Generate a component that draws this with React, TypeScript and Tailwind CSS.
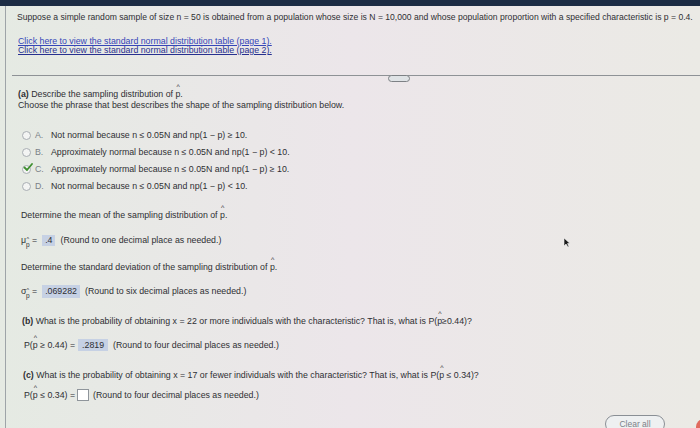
import React from "react";

const font = { fontFamily: '"Liberation Sans", Arial, sans-serif' };

function PHat({ children = "p" }: { children?: React.ReactNode }) {
  return (
    <span className="relative inline-block">
      {children}
      <span className="absolute left-[1px] top-[-6px] text-[7px] leading-none">^</span>
    </span>
  );
}

function Sub() {
  return (
    <span className="absolute left-[5px] top-[1px] flex flex-col items-center text-[6.5px] leading-[6px]">
      <span className="text-[5.5px]">^</span>
      <span>p</span>
    </span>
  );
}

function Radio({ checked }: { checked?: boolean }) {
  return (
    <span className="relative inline-flex w-[9px] h-[9px] rounded-full border border-[#a9aeb3] bg-[#f3f4f3] shrink-0">
      {checked && (
        <svg className="absolute left-[0px] top-[-3px]" width="10" height="9" viewBox="0 0 10 9">
          <path d="M1.5 4.5 L4 7 L9 1" stroke="#3f8f2f" strokeWidth="1.8" fill="none" strokeLinecap="round" strokeLinejoin="round" />
        </svg>
      )}
    </span>
  );
}

const options = [
  { k: "A.", t: <>Not normal because n ≤ 0.05N and np(1 − p) ≥ 10.</> },
  { k: "B.", t: <>Approximately normal because n ≤ 0.05N and np(1 − p) &lt; 10.</> },
  { k: "C.", t: <>Approximately normal because n ≤ 0.05N and np(1 − p) ≥ 10.</>, checked: true },
  { k: "D.", t: <>Not normal because n ≤ 0.05N and np(1 − p) &lt; 10.</> },
];

export default function App() {
  return (
    <div
      className="relative w-[700px] h-[428px] overflow-hidden bg-gradient-to-r from-[#e5eae3] via-[#ece6ea] to-[#ebeae5] text-[#2e2f33] text-[8.8px]"
      style={font}
    >
      <div className="h-[6px] bg-[#1c2c44]" />
      <div className="flex h-[422px]">
        {/* left rule */}
        <div className="w-[6px] shrink-0 border-r border-[#9ea4a8]" />
        <div className="flex-1 flex flex-col">
          <div className="pl-[11px] mt-[6px] h-[10px] leading-[10px] whitespace-nowrap text-[8.6px]">
            Suppose a simple random sample of size n = 50 is obtained from a population whose size is N = 10,000 and whose population proportion with a specified characteristic is p = 0.4.
          </div>
          <div className="pl-[12px] mt-[15px] h-[9px] leading-[9px] text-[#3546b8] underline whitespace-nowrap">
            Click here to view the standard normal distribution table (page 1).
          </div>
          <div className="pl-[12px] h-[9px] leading-[9px] text-[#27308f] underline whitespace-nowrap">
            Click here to view the standard normal distribution table (page 2).
          </div>

          {/* divider with handle */}
          <div className="mt-[20px] h-[7px] relative flex items-center pl-[6px]">
            <div className="flex-1 h-px bg-[#8e9296]" />
            <div className="absolute left-[382px] top-0 w-[22px] h-[7px] rounded-full border border-[#7d8185] bg-[#dfe3e6]" />
          </div>

          <div className="pl-[12px] mt-[13px] h-[10px] leading-[10px] whitespace-nowrap">
            <b>(a)</b> Describe the sampling distribution of <PHat />.
          </div>
          <div className="pl-[12px] mt-[1px] h-[10px] leading-[10px] whitespace-nowrap">
            Choose the phrase that best describes the shape of the sampling distribution below.
          </div>

          <div className="mt-[17px] flex flex-col pl-[16px]">
            {options.map((o) => (
              <div key={o.k} className="h-[17px] flex items-center whitespace-nowrap">
                <Radio checked={o.checked} />
                <span className="ml-[4px] w-[16px] text-[#7a7f86]">{o.k}</span>
                <span>{o.t}</span>
              </div>
            ))}
          </div>

          <div className="pl-[15px] mt-[15px] h-[10px] leading-[10px] whitespace-nowrap">
            Determine the mean of the sampling distribution of <PHat />.
          </div>
          <div className="pl-[15px] mt-[15px] h-[10px] leading-[10px] flex items-center whitespace-nowrap">
            <span className="relative inline-block w-[7px]">
              μ
              <Sub />
            </span>
            <span className="ml-[4px]">=</span>
            <span className="ml-[5px] px-[3px] bg-[#c6d1e4] h-[11px] leading-[11px]">.4</span>
            <span className="ml-[5px]">(Round to one decimal place as needed.)</span>
          </div>

          <div className="pl-[15px] mt-[17px] h-[10px] leading-[10px] whitespace-nowrap">
            Determine the standard deviation of the sampling distribution of <PHat />.
          </div>
          <div className="pl-[15px] mt-[14px] h-[10px] leading-[10px] flex items-center whitespace-nowrap">
            <span className="relative inline-block w-[7px]">
              σ
              <Sub />
            </span>
            <span className="ml-[4px]">=</span>
            <span className="ml-[5px] px-[3px] bg-[#c6d1e4] h-[13px] leading-[13px]">.069282</span>
            <span className="ml-[5px]">(Round to six decimal places as needed.)</span>
          </div>

          <div className="pl-[16px] mt-[20px] h-[10px] leading-[10px] whitespace-nowrap">
            <b>(b)</b> What is the probability of obtaining x = 22 or more individuals with the characteristic? That is, what is P(<PHat />≥0.44)?
          </div>
          <div className="pl-[18px] mt-[14px] h-[10px] leading-[10px] flex items-center whitespace-nowrap">
            <span>
              P(<PHat /> ≥ 0.44) =
            </span>
            <span className="ml-[3px] px-[4px] bg-[#c6d1e4] h-[12px] leading-[12px]">.2819</span>
            <span className="ml-[5px]">(Round to four decimal places as needed.)</span>
          </div>

          <div className="pl-[17px] mt-[20px] h-[10px] leading-[10px] whitespace-nowrap">
            <b>(c)</b> What is the probability of obtaining x = 17 or fewer individuals with the characteristic? That is, what is P(<PHat /> ≤ 0.34)?
          </div>
          <div className="pl-[18px] mt-[10px] h-[10px] leading-[10px] flex items-center whitespace-nowrap">
            <span>
              P(<PHat /> ≤ 0.34) =
            </span>
            <span className="ml-[2px] w-[12px] h-[12px] border border-[#8f959b] bg-white" />
            <span className="ml-[4px]">(Round to four decimal places as needed.)</span>
          </div>

          <div className="mt-[6px] h-px bg-[#c9cccf]" />
          <div className="mt-[9px] flex justify-end pr-[35px]">
            <div className="w-[60px] h-[18px] rounded-full border border-[#8a8f95] bg-[#eef0f1] text-center text-[#7b8087] text-[8.5px] leading-[16px]">
              Clear all
            </div>
          </div>
        </div>
      </div>

      {/* coral button edge */}
      <div className="absolute right-[-12px] top-[419px] w-[16px] h-[16px] rounded-full bg-[#e06a5e]" />

      {/* mouse cursor */}
      <svg className="absolute left-[563px] top-[237px]" width="8" height="11" viewBox="0 0 8 11">
        <path d="M1 1 L1 9 L3 7 L5 10 L6 9.5 L4.5 6.5 L7 6.5 Z" fill="#1a1a1a" stroke="#f3f3f3" strokeWidth="0.6" />
      </svg>
    </div>
  );
}
